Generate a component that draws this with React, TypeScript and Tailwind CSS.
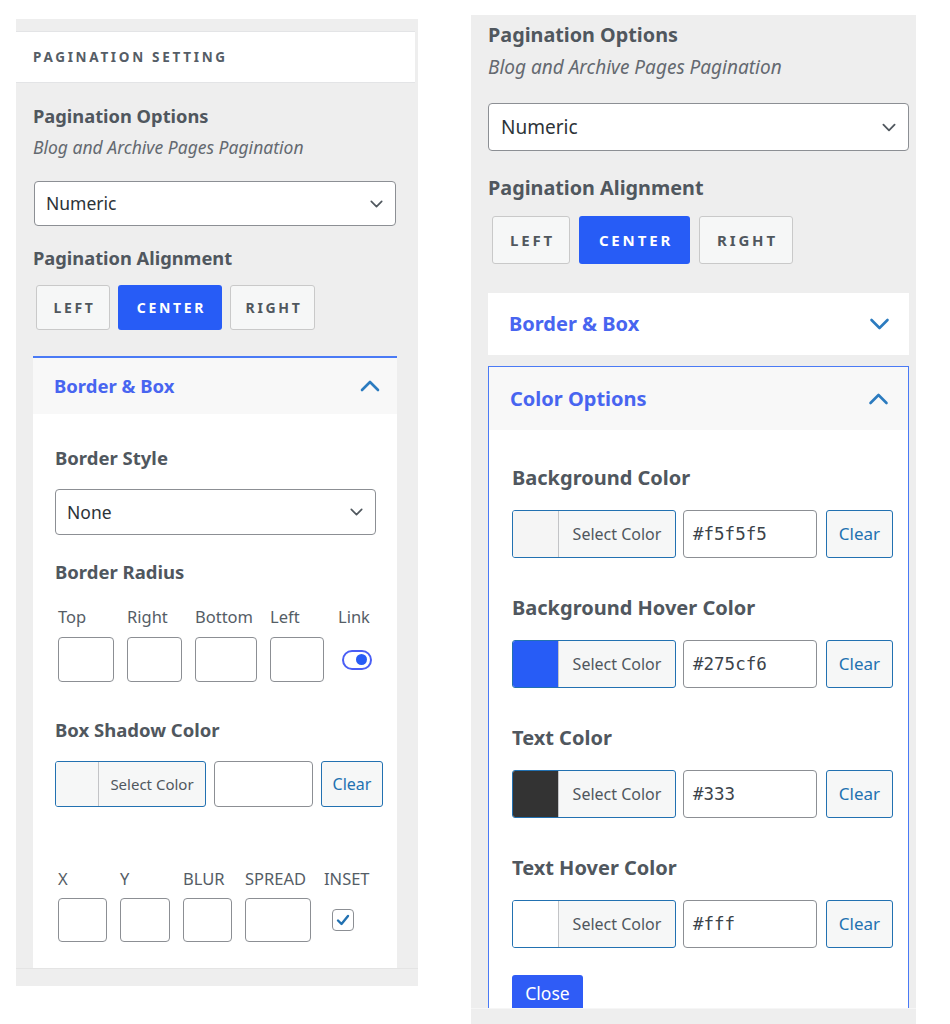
const font = { fontFamily: '"Noto Sans", "Open Sans", sans-serif' }

function Chevron({ up, className }: { up?: boolean; className?: string }) {
  return (
    <svg viewBox="0 0 20 12" className={className} fill="none" stroke="currentColor" strokeWidth="2.6" strokeLinecap="round" strokeLinejoin="round">
      {up ? <polyline points="2,10 10,2 18,10" /> : <polyline points="2,2 10,10 18,2" />}
    </svg>
  )
}

function LeftPanel() {
  return (
    <div className="ml-[16px] mt-[19px] w-[402px] h-[967px] bg-[#eeeeee] flex flex-col pt-[12px]">
      <div className="mr-[3px] h-[52px] bg-white border-y border-[#e3e4e6] flex items-center pl-[17px]">
        <span className="text-[13.5px] font-bold tracking-[0.2em] text-[#555d66]">PAGINATION SETTING</span>
      </div>

      <div className="px-[17px] flex flex-col">
        <h3 className="mt-[21px] text-[18.3px] leading-[24px] font-bold text-[#50575e]">Pagination Options</h3>
        <p className="mt-[8px] text-[17.5px] leading-[22px] italic text-[#646970]">Blog and Archive Pages Pagination</p>
        <div className="mt-[23px] ml-[1px] w-[362px] h-[45px] bg-white border border-[#8c8f94] rounded-[4px] flex items-center justify-between pl-[11px] pr-[12px]">
          <span className="text-[17.5px] text-[#2c3338]">Numeric</span>
          <Chevron className="w-[13px] h-[8px] text-[#50575e]" />
        </div>
        <h3 className="mt-[20px] text-[18.3px] leading-[24px] font-bold text-[#50575e]">Pagination Alignment</h3>
        <div className="mt-[15px] ml-[3px] flex gap-[8px]">
          <div className="w-[74px] h-[45px] bg-[#f6f7f7] border border-[#c9c9c9] rounded-[3px] flex items-center justify-center pl-[3px] text-[14px] font-bold tracking-[0.19em] text-[#50575e]">LEFT</div>
          <div className="w-[104px] h-[45px] bg-[#275cf6] rounded-[3px] flex items-center justify-center pl-[3px] text-[14px] font-bold tracking-[0.19em] text-white">CENTER</div>
          <div className="w-[85px] h-[45px] bg-[#f6f7f7] border border-[#c9c9c9] rounded-[3px] flex items-center justify-center pl-[3px] text-[14px] font-bold tracking-[0.19em] text-[#50575e]">RIGHT</div>
        </div>

        {/* Border & Box accordion */}
        <div className="mt-[26px] w-[364px] flex flex-col">
          <div className="h-[58px] bg-[#f8f8f8] border-t-2 border-[#4a7af5] flex items-center justify-between pl-[21px] pr-[17px]">
            <span className="text-[18.5px] font-bold text-[#4865f0]">Border &amp; Box</span>
            <Chevron up className="w-[20px] h-[12px] text-[#2b7bbf]" />
          </div>
          <div className="bg-white px-[22px] pt-[32px] pb-[26px] flex flex-col">
            <h4 className="text-[18.5px] leading-[24px] font-bold text-[#50575e]">Border Style</h4>
            <div className="mt-[19px] w-[321px] h-[46px] bg-white border border-[#8c8f94] rounded-[4px] flex items-center justify-between pl-[11px] pr-[12px]">
              <span className="text-[17.5px] text-[#2c3338]">None</span>
              <Chevron className="w-[13px] h-[8px] text-[#50575e]" />
            </div>
            <h4 className="mt-[25px] text-[18.5px] leading-[24px] font-bold text-[#50575e]">Border Radius</h4>
            <div className="mt-[22px] ml-[3px] flex gap-[13px] items-end">
              {[
                ['Top', 'w-[56px]'],
                ['Right', 'w-[55px]'],
                ['Bottom', 'w-[62px]'],
                ['Left', 'w-[54px]'],
              ].map(([l, w]) => (
                <div key={l} className="flex flex-col shrink-0">
                  <span className="text-[16.5px] leading-[22px] text-[#555d66]">{l}</span>
                  <div className={`mt-[9px] h-[45px] bg-white border border-[#8c8f94] rounded-[4px] ${w}`} />
                </div>
              ))}
              <div className="ml-[1px] flex flex-col shrink-0">
                <span className="text-[16.5px] leading-[22px] text-[#555d66]">Link</span>
                <div className="mt-[9px] h-[45px] flex items-center pl-[4px]">
                  <div className="w-[30px] h-[20px] rounded-full border-2 border-[#4a5ef5] flex items-center justify-end pr-[3px]">
                    <div className="w-[11px] h-[11px] rounded-full bg-[#275cf6]" />
                  </div>
                </div>
              </div>
            </div>
            <h4 className="mt-[36px] text-[18.5px] leading-[24px] font-bold text-[#50575e]">Box Shadow Color</h4>
            <div className="mt-[19px] flex items-center">
              <div className="shrink-0 w-[151px] h-[46px] border border-[#2271b1] rounded-[3px] overflow-hidden flex bg-[#f6f7f7]">
                <div className="w-[43px] h-full bg-[#f6f7f7] border-r border-[#c3c4c7]" />
                <div className="flex-1 flex items-center justify-center text-[15px] text-[#50575e]">Select Color</div>
              </div>
              <div className="shrink-0 ml-[8px] w-[99px] h-[46px] bg-white border border-[#8c8f94] rounded-[4px]" />
              <div className="shrink-0 ml-[8px] w-[62px] h-[46px] bg-[#f6f7f7] border border-[#2271b1] rounded-[3px] flex items-center justify-center text-[16px] text-[#2271b1]">Clear</div>
            </div>
            <div className="mt-[61px] ml-[3px] flex gap-[13px] items-end">
              {[
                ['X', 'w-[49px]'],
                ['Y', 'w-[50px]'],
                ['BLUR', 'w-[49px]'],
                ['SPREAD', 'w-[66px]'],
              ].map(([l, w]) => (
                <div key={l} className="flex flex-col shrink-0">
                  <span className="text-[16.5px] leading-[22px] text-[#555d66]">{l}</span>
                  <div className={`mt-[8px] h-[44px] bg-white border border-[#8c8f94] rounded-[4px] ${w}`} />
                </div>
              ))}
              <div className="flex flex-col shrink-0">
                <span className="text-[16.5px] leading-[22px] text-[#555d66]">INSET</span>
                <div className="mt-[8px] h-[44px] flex items-center pl-[8px]">
                  <div className="w-[22px] h-[22px] border border-[#8c8f94] rounded-[4px] bg-white flex items-center justify-center">
                    <svg viewBox="0 0 16 16" className="w-[16px] h-[16px]" fill="none" stroke="#2271b1" strokeWidth="2.4" strokeLinecap="round" strokeLinejoin="round">
                      <polyline points="3,8.5 6.5,12 13,4" />
                    </svg>
                  </div>
                </div>
              </div>
            </div>
          </div>
        </div>
      </div>
      <div className="mt-auto h-[18px] border-t border-[#e4e4e4]" />
    </div>
  )
}

function ColorRow({ label, swatch, value }: { label: string; swatch: string; value: string }) {
  return (
    <div className="flex flex-col">
      <h4 className="text-[20px] leading-[26px] font-bold text-[#50575e]">{label}</h4>
      <div className="mt-[19px] flex items-center">
        <div className="shrink-0 w-[164px] h-[48px] border border-[#2271b1] rounded-[3px] overflow-hidden flex bg-[#f6f7f7]">
          <div className="w-[46px] h-full border-r border-[#c3c4c7]" style={{ backgroundColor: swatch }} />
          <div className="flex-1 flex items-center justify-center text-[16px] text-[#50575e]">Select Color</div>
        </div>
        <div className="shrink-0 ml-[7px] w-[134px] h-[48px] bg-white border border-[#8c8f94] rounded-[4px] flex items-center pl-[9px]">
          <span className="text-[17.5px] text-[#3c434a]" style={{ fontFamily: '"DejaVu Sans Mono", "Liberation Mono", monospace' }}>{value}</span>
        </div>
        <div className="shrink-0 ml-[9px] w-[67px] h-[48px] bg-[#f6f7f7] border border-[#2271b1] rounded-[3px] flex items-center justify-center text-[17px] text-[#2271b1]">Clear</div>
      </div>
    </div>
  )
}

function RightPanel() {
  return (
    <div className="ml-[53px] mt-[15px] w-[445px] h-[1009px] bg-[#eeeeee] flex flex-col">
      <div className="h-[993px] overflow-hidden pl-[17px] pt-[7px] flex flex-col">
        <h3 className="text-[19.8px] leading-[26px] font-bold text-[#50575e]">Pagination Options</h3>
        <p className="mt-[8px] text-[19px] leading-[23px] italic text-[#646970]">Blog and Archive Pages Pagination</p>
        <div className="mt-[24px] w-[421px] h-[48px] shrink-0 bg-white border border-[#8c8f94] rounded-[4px] flex items-center justify-between pl-[12px] pr-[12px]">
          <span className="text-[19px] text-[#2c3338]">Numeric</span>
          <Chevron className="w-[14px] h-[9px] text-[#50575e]" />
        </div>
        <h3 className="mt-[24px] text-[19.8px] leading-[26px] font-bold text-[#50575e]">Pagination Alignment</h3>
        <div className="mt-[15px] ml-[4px] flex gap-[9px]">
          <div className="w-[78px] h-[48px] bg-[#f6f7f7] border border-[#c9c9c9] rounded-[3px] flex items-center justify-center pl-[3px] text-[15px] font-bold tracking-[0.19em] text-[#50575e]">LEFT</div>
          <div className="w-[111px] h-[48px] bg-[#275cf6] rounded-[3px] flex items-center justify-center pl-[3px] text-[15px] font-bold tracking-[0.19em] text-white">CENTER</div>
          <div className="w-[94px] h-[48px] bg-[#f6f7f7] border border-[#c9c9c9] rounded-[3px] flex items-center justify-center pl-[3px] text-[15px] font-bold tracking-[0.19em] text-[#50575e]">RIGHT</div>
        </div>

        <div className="mt-[29px] w-[421px] h-[62px] shrink-0 bg-white flex items-center justify-between pl-[21px] pr-[19px]">
          <span className="text-[20px] font-bold text-[#4865f0]">Border &amp; Box</span>
          <Chevron className="w-[21px] h-[12px] text-[#2b7bbf]" />
        </div>

        <div className="mt-[11px] w-[421px] shrink-0 border border-[#4a7af5] bg-white flex flex-col">
          <div className="h-[63px] bg-[#f8f8f8] flex items-center justify-between pl-[21px] pr-[19px]">
            <span className="text-[20px] font-bold text-[#4865f0]">Color Options</span>
            <Chevron up className="w-[21px] h-[12px] text-[#2b7bbf]" />
          </div>
          <div className="px-[23px] pt-[35px] pb-[40px] flex flex-col gap-[37px]">
            <ColorRow label="Background Color" swatch="#f5f5f5" value="#f5f5f5" />
            <ColorRow label="Background Hover Color" swatch="#275cf6" value="#275cf6" />
            <ColorRow label="Text Color" swatch="#333333" value="#333" />
            <ColorRow label="Text Hover Color" swatch="#ffffff" value="#fff" />
          </div>
          <div className="-mt-[13px] ml-[23px] w-[71px] h-[40px] bg-[#2f5cf6] rounded-[3px] flex items-start justify-center pt-[5px] text-[17.5px] text-white">Close</div>
        </div>
      </div>
      <div className="h-[16px] border-t border-[#f6f6f6]" />
    </div>
  )
}

export default function App() {
  return (
    <div className="w-[950px] h-[1024px] bg-white flex items-start overflow-hidden" style={font}>
      <LeftPanel />
      <RightPanel />
    </div>
  )
}
